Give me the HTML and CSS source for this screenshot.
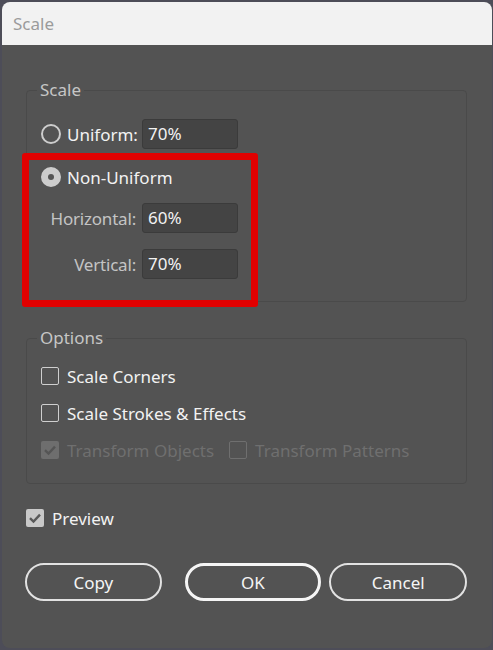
FILE: index.html
```html
<!DOCTYPE html>
<html>
<head>
<meta charset="utf-8">
<link rel="stylesheet" href="styles.css">
</head>
<body>
<div class="dialog">
  <div class="titlebar">Scale</div>
  <div class="content">
    <fieldset class="group scale-group">
      <legend>Scale</legend>
      <div class="group-inner scale-inner">
        <div class="row">
          <div class="lbl lbl-radio"><span class="radio"></span><span class="text">Uniform:</span></div>
          <div class="field">70%</div>
        </div>
        <div class="row row-nu">
          <div class="lbl lbl-radio"><span class="radio on"></span><span class="text">Non-Uniform</span></div>
        </div>
        <div class="row row-h">
          <div class="lbl lbl-right">Horizontal:</div>
          <div class="field">60%</div>
        </div>
        <div class="row row-v">
          <div class="lbl lbl-right">Vertical:</div>
          <div class="field">70%</div>
        </div>
      </div>
    </fieldset>

    <fieldset class="group options-group">
      <legend>Options</legend>
      <div class="group-inner options-inner">
        <div class="check-row"><span class="box"></span><span class="text">Scale Corners</span></div>
        <div class="check-row"><span class="box"></span><span class="text">Scale Strokes &amp; Effects</span></div>
        <div class="check-row disabled">
          <span class="box checked dis"><svg viewBox="0 0 18 18" width="18" height="18"><path d="M4 9.2 L7.5 12.6 L14 5.6" fill="none" stroke="#555" stroke-width="2.4"/></svg></span><span class="text">Transform Objects</span>
          <span class="box dis-empty"></span><span class="text">Transform Patterns</span>
        </div>
      </div>
    </fieldset>

    <div class="check-row preview"><span class="box checked"><svg viewBox="0 0 18 18" width="18" height="18"><path d="M4 9.2 L7.5 12.6 L14 5.6" fill="none" stroke="#5a5a5a" stroke-width="2.4"/></svg></span><span class="text">Preview</span></div>

    <div class="buttons">
      <div class="btn btn-copy">Copy</div>
      <div class="btn btn-ok">OK</div>
      <div class="btn btn-cancel">Cancel</div>
    </div>
  </div>
  <div class="annotation"></div>
</div>
</body>
</html>
```

FILE: styles.css
```css
html, body {
  margin: 0;
  padding: 0;
}
body {
  background: #4d4d58;
  width: 493px;
  height: 650px;
  overflow: hidden;
  font-family: "Noto Sans", "Open Sans", sans-serif;
}
.dialog {
  position: relative;
  margin: 2px 0 0 2px;
  width: 490px;
  height: 646px;
  border-radius: 8px;
  overflow: hidden;
  background: #535353;
}
.titlebar {
  height: 43px;
  background: #f2f2f2;
  color: #9b9b9b;
  font-size: 17px;
  line-height: 43px;
  padding-left: 11px;
  box-sizing: border-box;
}
.content {
  padding: 0 25px 0 24px;
}
.group {
  margin: 0;
  padding: 0;
  border: 1px solid #4a4a4a;
  border-radius: 4px;
  min-width: 0;
}
.group legend {
  margin-left: 10px;
  padding: 0 3px;
  font-size: 17px;
  line-height: 22px;
  color: #c6c6c6;
}
.scale-group {
  margin-top: 34px;
}
.group-inner {
  padding-left: 14px;
}
.scale-inner {
  padding-top: 18px;
  padding-bottom: 22px;
}
.row {
  display: grid;
  grid-template-columns: 95px 96px;
  column-gap: 6px;
  align-items: center;
  height: 30px;
}
.row-nu { margin-top: 13px; }
.row-h { margin-top: 11px; }
.row-v { margin-top: 16px; }
.lbl {
  font-size: 17px;
  color: #f2f2f2;
  white-space: nowrap;
}
.lbl-radio {
  display: flex;
  align-items: center;
}
.lbl-radio .text {
  margin-left: 6px;
}
.lbl-right {
  text-align: right;
  color: #c4c4c4;
  letter-spacing: -0.2px;
}
.radio {
  width: 20px;
  height: 20px;
  box-sizing: border-box;
  border: 2px solid #cdcdcd;
  border-radius: 50%;
  flex: none;
  position: relative;
}
.radio.on {
  background: #cdcdcd;
}
.radio.on::after {
  content: "";
  position: absolute;
  left: 5px;
  top: 5px;
  width: 6px;
  height: 6px;
  border-radius: 50%;
  background: #555;
}
.field {
  height: 30px;
  box-sizing: border-box;
  background: #444444;
  border: 1px solid #3b3b3b;
  border-radius: 3px;
  color: #f2f2f2;
  font-size: 17px;
  line-height: 28px;
  padding-left: 5px;
}
.options-group {
  margin-top: 25px;
}
.options-inner {
  padding-top: 16px;
  padding-bottom: 22px;
  display: flex;
  flex-direction: column;
  gap: 15px;
}
.check-row {
  display: flex;
  align-items: center;
  height: 22px;
  font-size: 17px;
  color: #f2f2f2;
  white-space: nowrap;
}
.check-row .text {
  margin-left: 8px;
}
.box {
  width: 18px;
  height: 18px;
  box-sizing: border-box;
  border: 1.5px solid #cfcfcf;
  border-radius: 2px;
  flex: none;
  display: flex;
  align-items: center;
  justify-content: center;
}
.box svg { display: block; }
.box.checked {
  background: #c9c9c9;
  border: none;
}
.box.dis {
  background: #6e6e6e;
}
.check-row.disabled {
  color: #6f6f6f;
}
.box.dis-empty {
  border-color: #6f6f6f;
  margin-left: 15px;
}
.preview {
  margin-top: 23px;
}
.buttons {
  display: flex;
  margin-top: 34px;
  margin-left: -1px;
}
.btn {
  width: 137px;
  height: 38px;
  box-sizing: border-box;
  border: 2px solid #e2e2e2;
  border-radius: 19px;
  color: #f5f5f5;
  font-size: 17px;
  display: flex;
  align-items: center;
  justify-content: center;
}
.btn-copy { margin-right: 23px; }
.btn-ok {
  border: 3px solid #f5f5f5;
  margin-right: 8px;
}
.btn-cancel { width: 138px; }
.annotation {
  position: absolute;
  left: 20px;
  top: 151px;
  width: 236px;
  height: 154px;
  box-sizing: border-box;
  border: 7px solid #e10000;
  border-radius: 3px;
}
```
